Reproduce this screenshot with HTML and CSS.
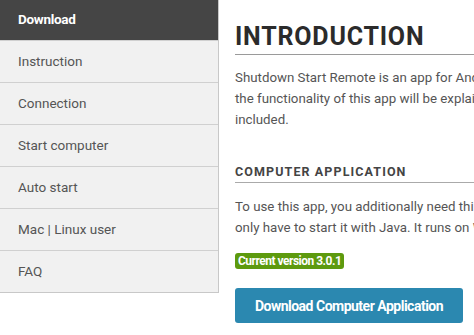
FILE: index.html
```html
<!DOCTYPE html>
<html>
<head>
<meta charset="utf-8">
<link rel="stylesheet" href="styles.css">
</head>
<body>
<div class="page">
  <nav class="sidebar">
    <a class="item active">Download</a>
    <a class="item">Instruction</a>
    <a class="item">Connection</a>
    <a class="item">Start computer</a>
    <a class="item">Auto start</a>
    <a class="item">Mac | Linux user</a>
    <a class="item">FAQ</a>
  </nav>
  <main class="main">
    <h1 class="title">INTRODUCTION</h1>
    <p class="text">
      <span class="line">Shutdown Start Remote is an app for Android. In this guide</span>
      <span class="line">the functionality of this app will be explained and some tips are</span>
      <span class="line">included.</span>
    </p>
    <h2 class="subtitle">COMPUTER APPLICATION</h2>
    <p class="text">
      <span class="line">To use this app, you additionally need this computer application. You</span>
      <span class="line">only have to start it with Java. It runs on Windows, Mac and Linux.</span>
    </p>
    <div class="badge-row"><span class="badge">Current version 3.0.1</span></div>
    <button class="btn">Download Computer Application</button>
  </main>
</div>
</body>
</html>
```
FILE: styles.css
```css
html, body {
  margin: 0;
  padding: 0;
  background: #fff;
  overflow: hidden;
}
body {
  font-family: Roboto, "Liberation Sans", sans-serif;
  width: 474px;
  height: 335px;
}
.page {
  display: flex;
  align-items: flex-start;
  width: 474px;
  overflow: hidden;
}
.sidebar {
  flex: 0 0 218px;
  display: flex;
  flex-direction: column;
  background: #f1f1f1;
  border-right: 1px solid #c8c8c8;
  border-bottom: 1px solid #c8c8c8;
}
.item {
  display: block;
  height: 41px;
  line-height: 41px;
  padding-left: 18px;
  font-size: 13.5px;
  color: #555;
  border-top: 1px solid #d0d0d0;
}
.item.active {
  background: #454545;
  color: #fff;
  font-weight: 700;
  height: 40px;
  line-height: 38px;
  border-top: none;
  letter-spacing: -0.3px;
}
.main {
  flex: 1 1 auto;
  min-width: 0;
  padding-left: 16px;
  overflow: hidden;
}
.title {
  margin: 22px 0 0;
  font-size: 25px;
  line-height: 30px;
  font-weight: 700;
  letter-spacing: 0.8px;
  color: #2b2b2b;
  padding-bottom: 2px;
  border-bottom: 1px solid #9a9a9a;
  white-space: nowrap;
}
.text {
  margin: 12px 0 0;
  font-size: 13.3px;
  line-height: 21px;
  color: #555;
}
.line {
  display: block;
  white-space: nowrap;
}
.subtitle {
  margin: 34px 0 0;
  font-size: 12.5px;
  line-height: 16px;
  font-weight: 700;
  letter-spacing: 1.1px;
  color: #444;
  padding-bottom: 2px;
  border-bottom: 1px solid #aaa;
  white-space: nowrap;
}
.subtitle + .text {
  margin-top: 13px;
}
.badge-row {
  margin-top: 15px;
  display: flex;
}
.badge {
  background: #5d9a0e;
  color: #fff;
  font-size: 12px;
  font-weight: 700;
  letter-spacing: -0.5px;
  line-height: 16px;
  padding: 0 3px;
  border-radius: 3px;
}
.btn {
  display: block;
  margin-top: 19px;
  width: 228px;
  height: 35px;
  background: #2b88b0;
  color: #fff;
  border: none;
  border-radius: 3px;
  font-family: Roboto, "Liberation Sans", sans-serif;
  font-size: 14px;
  font-weight: 700;
  letter-spacing: -0.5px;
  padding: 0;
}
```
